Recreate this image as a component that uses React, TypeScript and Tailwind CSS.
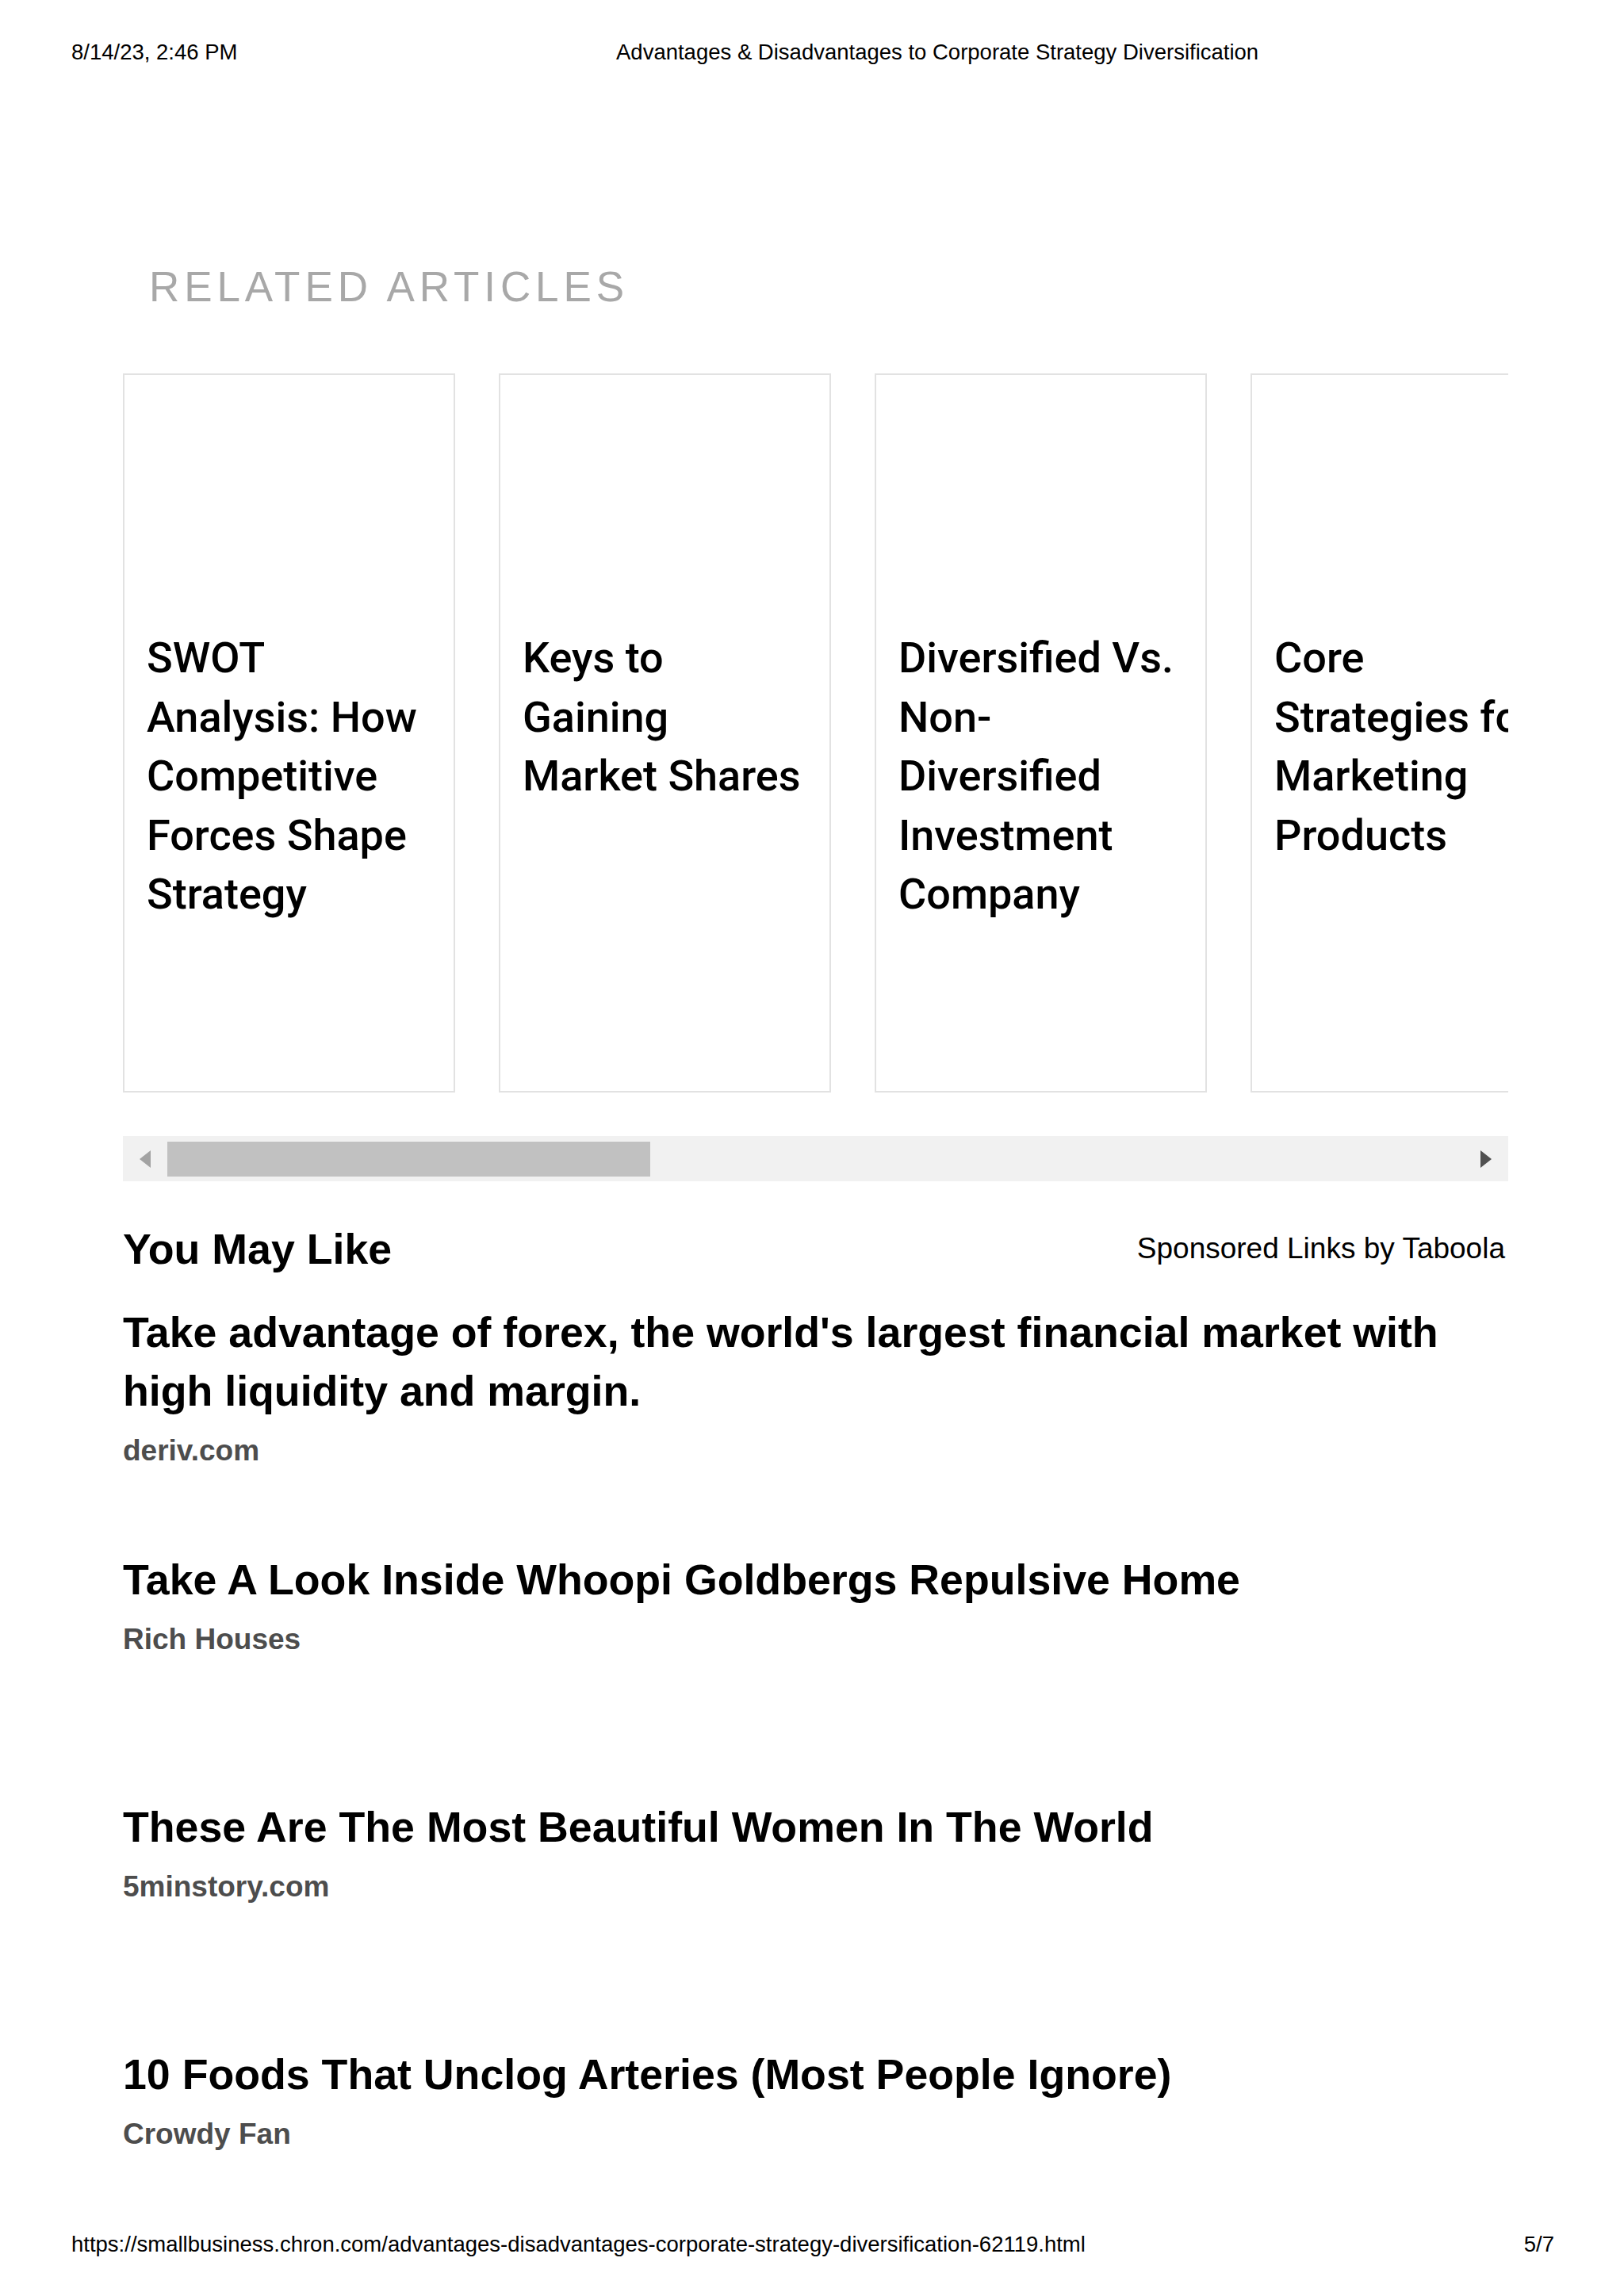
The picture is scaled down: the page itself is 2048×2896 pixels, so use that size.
import React from "react";

const related = [
  "SWOT Analysis: How Competitive Forces Shape Strategy",
  "Keys to Gaining Market Shares",
  "Diversified Vs. Non-Diversified Investment Company",
  "Core Strategies for Marketing Products",
  "Corporate Level Strategy Examples",
];

const ads = [
  {
    title: "Take advantage of forex, the world's largest financial market with high liquidity and margin.",
    source: "deriv.com",
  },
  { title: "Take A Look Inside Whoopi Goldbergs Repulsive Home", source: "Rich Houses" },
  { title: "These Are The Most Beautiful Women In The World", source: "5minstory.com" },
  { title: "10 Foods That Unclog Arteries (Most People Ignore)", source: "Crowdy Fan" },
];

const App = () => {
  return (
    <div className="w-[2048px] h-[2896px] bg-white flex flex-col text-black font-['Liberation_Sans',Arial,sans-serif]">
      {/* print header */}
      <div className="flex-none h-[132px] flex items-center px-[90px] text-[27.5px]">
        <div className="w-[687px] flex-none">8/14/23, 2:46 PM</div>
        <div>Advantages &amp; Disadvantages to Corporate Strategy Diversification</div>
      </div>

      <div className="flex-none pl-[155px] pr-[146px]">
        <h2 className="mt-[198px] pl-[33px] text-[53px] leading-[64px] tracking-[5.9px] text-[#a8a8a8]">
          RELATED ARTICLES
        </h2>

        {/* cards row, clipped like a scroller */}
        <div className="mt-[77px] flex gap-[55px] overflow-hidden">
          {related.map((t) => (
            <div
              key={t}
              className="flex-none w-[419px] h-[907px] border-2 border-[#e2e2e2] pt-[320px] px-[28px]"
            >
              <div className="font-['Roboto',sans-serif] font-medium text-[54px] leading-[74.5px] text-black">
                {t}
              </div>
            </div>
          ))}
        </div>

        {/* horizontal scrollbar */}
        <div className="mt-[55px] h-[57px] bg-[#f1f1f1] flex items-center">
          <div className="w-[56px] flex-none flex justify-center">
            <div className="w-0 h-0 border-y-[11.5px] border-y-transparent border-r-[14px] border-r-[#a3a3a3]" />
          </div>
          <div className="w-[609px] h-[44px] bg-[#c1c1c1]" />
          <div className="flex-1" />
          <div className="w-[56px] flex-none flex justify-center">
            <div className="w-0 h-0 border-y-[11.5px] border-y-transparent border-l-[14px] border-l-[#505050]" />
          </div>
        </div>

        <div className="mt-[48px] h-[74px] flex items-center justify-between">
          <h3 className="text-[53.7px] font-bold">You May Like</h3>
          <span className="text-[37px] pr-[4px]">Sponsored Links by Taboola</span>
        </div>

        <div className="mt-[31px] flex flex-col">
          {ads.map((a) => (
            <div key={a.source} className="h-[312px] last:h-auto">
              <div className="text-[53.7px] leading-[74px] font-bold">{a.title}</div>
              <div className="mt-[13px] text-[37px] leading-[52px] font-bold text-[#4d4d4d]">{a.source}</div>
            </div>
          ))}
        </div>
      </div>

      {/* print footer */}
      <div className="mt-auto flex-none h-[130px] flex items-center justify-between pl-[90px] pr-[88px] text-[27.5px]">
        <span>https://smallbusiness.chron.com/advantages-disadvantages-corporate-strategy-diversification-62119.html</span>
        <span>5/7</span>
      </div>
    </div>
  );
};

export default App;
